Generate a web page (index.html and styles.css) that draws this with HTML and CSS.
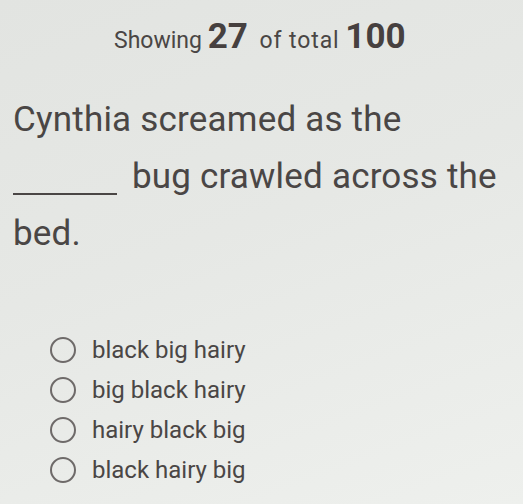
FILE: index.html
```html
<!DOCTYPE html>
<html>
  <head>
    <title>Quiz</title>
    <link rel="stylesheet" href="styles.css">
  </head>
  <body>
    <div class="counter">
      <span>Showing</span> <b class="num">27</b> <span class="of">of total</span> <b class="num">100</b>
    </div>
    <div class="question">
      Cynthia screamed as the<br>
      <span class="blank"></span> bug crawled across the<br>
      bed.
    </div>
    <ul class="options">
      <li><span class="radio"></span>black big hairy</li>
      <li><span class="radio"></span>big black hairy</li>
      <li><span class="radio"></span>hairy black big</li>
      <li><span class="radio"></span>black hairy big</li>
    </ul>
  </body>
</html>
```

FILE: styles.css
```css
body { margin: 0; height: 504px; overflow: hidden; font-family: Roboto, "Liberation Sans", sans-serif; color: #4a4645; background: linear-gradient(160deg, #e2e4e1 0%, #e6e8e5 45%, #eef0ed 100%); }

.counter { padding: 16px 0 0 114px; font-size: 23px; height: 38px; }
.counter .num { font-size: 35px; font-weight: 700; color: #46403f; }
.counter .of { margin-left: 6px; letter-spacing: 0.9px; }

.question { padding: 37px 0 0 13px; font-size: 35px; line-height: 57px; letter-spacing: 0.2px; }
.blank { display: inline-block; width: 104px; border-bottom: 2px solid #4a4645; margin-right: 6px; vertical-align: -7px; }

.options { list-style: none; margin: 0; padding: 68px 0 0 50px; font-size: 24px; }
.options li { display: flex; align-items: center; height: 40px; }
.radio { width: 26px; height: 26px; border: 2px solid #6e6a69; border-radius: 50%; margin-right: 16px; box-sizing: border-box; }
```
